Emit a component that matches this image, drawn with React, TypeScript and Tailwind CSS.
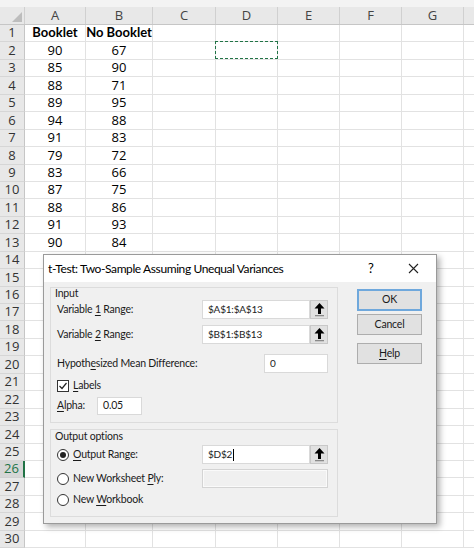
import React from "react";

const COL_W = [61, 67, 63, 62, 62, 62, 62];
const COL_L = ["A", "B", "C", "D", "E", "F", "G"];
const A = ["Booklet", "90", "85", "88", "89", "94", "91", "79", "83", "87", "88", "91", "90"];
const B = ["No Booklet", "67", "90", "71", "95", "88", "83", "72", "66", "75", "86", "93", "84"];

const sheetFont = { fontFamily: '"Open Sans", "Noto Sans", sans-serif' };
const boldFont = { fontFamily: 'Lato, "Open Sans", sans-serif' };
const dlgFont = { fontFamily: 'Lato, "Open Sans", sans-serif' };

function U({ children }: { children: React.ReactNode }) {
  return <span className="underline underline-offset-2 decoration-[1px]">{children}</span>;
}

function RefBtn() {
  return (
    <div className="w-[18px] h-[19px] bg-[#e1e1e1] border border-[#c8c8c8] flex items-center justify-center">
      <svg width="13" height="15" viewBox="0 0 13 15">
        <path d="M6.5 1 L11.5 6.5 L8 6.5 L8 12 L5 12 L5 6.5 L1.5 6.5 Z" fill="#000" />
        <rect x="2" y="13.3" width="9" height="0.9" fill="#666" />
      </svg>
    </div>
  );
}

function TextBox({ w, value, caret }: { w: number; value: string; caret?: boolean }) {
  return (
    <div
      className="h-[19px] bg-white border border-[#d9d9d9] flex items-center pl-[5px] text-[10px] tracking-[-0.2px] text-[#222]"
      style={{ width: w }}
    >
      {value}
      {caret && <span className="inline-block w-[1px] h-[12px] bg-black ml-[1px]" />}
    </div>
  );
}

function Radio({ on }: { on?: boolean }) {
  return (
    <div className="w-[12px] h-[12px] rounded-full border border-[#333] bg-white flex items-center justify-center">
      {on && <div className="w-[6px] h-[6px] rounded-full bg-[#222]" />}
    </div>
  );
}

export default function App() {
  const rows = Array.from({ length: 30 }, (_, i) => i + 1);
  return (
    <div className="relative w-[474px] h-[553px] overflow-hidden bg-white" style={sheetFont}>
      <div className="h-[7px] bg-[#f3f3f3]" />
      {/* header row */}
      <div className="flex h-[18px] bg-[#e8e8e8] border-b border-[#c6c6c6]">
        <div className="w-[25px] shrink-0 border-r border-[#d0d0d0] flex items-end justify-end pr-[2px] pb-[2px]">
          <svg width="10" height="10" viewBox="0 0 10 10">
            <path d="M10 0 L10 10 L0 10 Z" fill="#bdbdbd" />
          </svg>
        </div>
        {COL_W.map((w, i) => (
          <div
            key={i}
            className="shrink-0 border-r border-[#d0d0d0] flex items-center justify-center text-[13px] text-[#444]"
            style={{ width: w }}
          >
            {COL_L[i]}
          </div>
        ))}
        <div className="flex-1" />
      </div>
      {rows.map((r) => (
        <div key={r} className="flex h-[17.45px]">
          <div
            className={
              r === 26
                ? "w-[25px] shrink-0 bg-[#d6d6d6] border-r-2 border-[#217346] border-b border-b-[#d0d0d0] flex items-center justify-center text-[13px] text-[#217346]"
                : "w-[25px] shrink-0 bg-[#e8e8e8] border-r border-[#c6c6c6] border-b border-b-[#d6d6d6] flex items-center justify-center text-[13px] text-[#333]"
            }
          >
            {r}
          </div>
          {COL_W.map((w, i) => {
            let txt = "";
            if (r <= 13 && i === 0) txt = A[r - 1];
            if (r <= 13 && i === 1) txt = B[r - 1];
            return (
              <div
                key={i}
                className={
                  "relative shrink-0 border-r border-b border-[#e2e2e2] flex items-center justify-center whitespace-nowrap text-black " +
                  (r === 1 ? "font-bold text-[13px]" : "text-[13px]")
                }
                style={r === 1 ? { width: w, ...boldFont } : { width: w }}
              >
                {txt}
                {r === 2 && i === 3 && (
                  <div className="absolute -left-[1px] -top-[1px] w-[63px] h-[18px] border border-dashed border-[#217346]" />
                )}
              </div>
            );
          })}
          <div className="flex-1 border-b border-[#e2e2e2]" />
        </div>
      ))}

      {/* Dialog */}
      <div
        className="absolute left-[43px] top-[254px] w-[394px] h-[270px] bg-[#f0f0f0] border border-[#9a9a9a] shadow-[3px_3px_6px_rgba(0,0,0,0.3)] flex flex-col text-[10.5px] tracking-[-0.2px] text-[#1a1a1a]"
        style={dlgFont}
      >
        <div className="h-[27px] bg-white flex items-center pl-[4px] text-[12px] tracking-[-0.4px] text-black shrink-0">
          <span className="flex-1">t-Test: Two-Sample Assuming Unequal Variances</span>
          <span className="w-[40px] text-[13px]">?</span>
          <svg width="11" height="11" viewBox="0 0 11 11" className="mr-[17px]">
            <path d="M1 1 L10 10 M10 1 L1 10" stroke="#222" strokeWidth="1.1" />
          </svg>
        </div>
        <div className="flex flex-1">
          <div className="ml-[6px] w-[288px] flex flex-col">
            {/* Input group */}
            <div className="mt-[5px] h-[136px] border border-[#dcdcdc] pl-[6px] pr-[9px] flex flex-col">
              <div className="h-[12px] flex items-center -ml-[2px]">Input</div>
              <div className="h-[19px] flex items-center justify-between">
                <span>
                  Variable <U>1</U> Range:
                </span>
                <div className="flex">
                  <TextBox w={108} value="$A$1:$A$13" />
                  <RefBtn />
                </div>
              </div>
              <div className="mt-[6px] h-[19px] flex items-center justify-between">
                <span>
                  Variable <U>2</U> Range:
                </span>
                <div className="flex">
                  <TextBox w={108} value="$B$1:$B$13" />
                  <RefBtn />
                </div>
              </div>
              <div className="mt-[10px] h-[19px] flex items-center justify-between">
                <span>
                  Hypoth<U>e</U>sized Mean Difference:
                </span>
                <TextBox w={64} value="0" />
              </div>
              <div className="mt-[6px] h-[14px] flex items-center gap-[4px]">
                <div className="w-[12px] h-[12px] border border-[#333] bg-white flex items-center justify-center">
                  <svg width="10" height="10" viewBox="0 0 10 10">
                    <path d="M1.5 5 L4 7.5 L8.5 2" stroke="#222" strokeWidth="1.2" fill="none" />
                  </svg>
                </div>
                <span>
                  <U>L</U>abels
                </span>
              </div>
              <div className="mt-[4px] h-[18px] flex items-center">
                <span className="w-[40px]">
                  <U>A</U>lpha:
                </span>
                <div className="h-[18px] w-[45px] bg-white border border-[#d9d9d9] flex items-center pl-[5px] text-[10.5px]">
                  0.05
                </div>
              </div>
            </div>
            {/* Output group */}
            <div className="mt-[6px] h-[88px] border border-[#dcdcdc] pl-[6px] pr-[9px] flex flex-col">
              <div className="h-[14px] flex items-center -ml-[2px]">Output options</div>
              <div className="mt-[1px] h-[19px] flex items-center justify-between">
                <div className="flex items-center gap-[4px]">
                  <Radio on />
                  <span>
                    <U>O</U>utput Range:
                  </span>
                </div>
                <div className="flex">
                  <TextBox w={108} value="$D$2" caret />
                  <RefBtn />
                </div>
              </div>
              <div className="mt-[5px] h-[19px] flex items-center justify-between">
                <div className="flex items-center gap-[4px]">
                  <Radio />
                  <span>
                    New Worksheet <U>P</U>ly:
                  </span>
                </div>
                <div className="w-[126px] h-[19px] bg-[#f0f0f0] border border-[#d4d4d4] shadow-[inset_0_0_0_1px_#fafafa]" />
              </div>
              <div className="mt-[4px] h-[16px] flex items-center gap-[4px]">
                <Radio />
                <span>
                  New <U>W</U>orkbook
                </span>
              </div>
            </div>
          </div>
          <div className="ml-[19px] mt-[7px] w-[65px] flex flex-col">
            <div className="h-[22px] bg-[#e1e1e1] border-2 border-[#6fa8dc] flex items-center justify-center">
              OK
            </div>
            <div className="mt-[3px] h-[21px] bg-[#e1e1e1] border border-[#adadad] flex items-center justify-center">
              Cancel
            </div>
            <div className="mt-[8px] h-[21px] bg-[#e1e1e1] border border-[#adadad] flex items-center justify-center">
              <span>
                <U>H</U>elp
              </span>
            </div>
          </div>
        </div>
      </div>
    </div>
  );
}
